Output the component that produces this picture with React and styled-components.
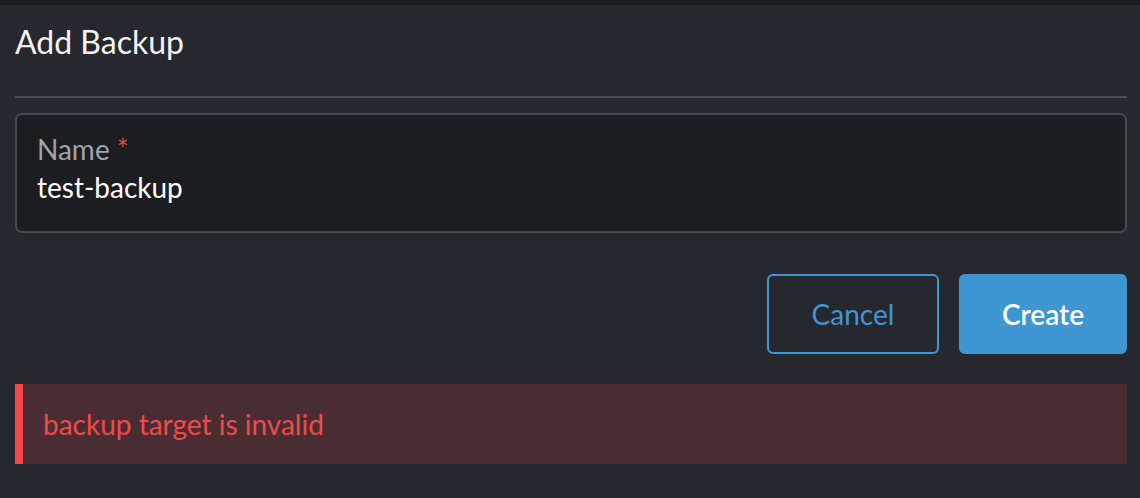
import React from "react";
import styled, { createGlobalStyle } from "styled-components";

const GlobalStyle = createGlobalStyle`
  html, body {
    margin: 0;
    padding: 0;
    background: #27282d;
    font-family: Lato, "Open Sans", sans-serif;
  }
`;

const Page = styled.div`
  width: 1140px;
  height: 498px;
  background: #27282d;
  border-top: 5px solid #1c1d21;
  box-sizing: border-box;
`;

const Content = styled.div`
  padding: 0 13px 0 15px;
  display: flex;
  flex-direction: column;
`;

const Title = styled.h1`
  margin: 0;
  padding: 19px 0 0;
  height: 93px;
  box-sizing: border-box;
  font-size: 32px;
  font-weight: 400;
  line-height: 36px;
  color: #f4f4f6;
  border-bottom: 2px solid #4b4c51;
`;

const Field = styled.div`
  margin-top: 15px;
  height: 120px;
  box-sizing: border-box;
  border: 2px solid #48494e;
  border-radius: 7px;
  background: #1c1d21;
  padding: 16px 20px 0;
  display: flex;
  flex-direction: column;
`;

const Label = styled.label`
  font-size: 28px;
  line-height: 36px;
  color: #a2a3ad;
`;

const Required = styled.span`
  color: #e04848;
  margin-left: 7px;
`;

const Value = styled.div`
  font-size: 28px;
  line-height: 40px;
  color: #ffffff;
`;

const Actions = styled.div`
  margin-top: 41px;
  display: flex;
  justify-content: flex-end;
  gap: 20px;
`;

const Button = styled.button`
  height: 80px;
  width: ${(p) => p.$width}px;
  box-sizing: border-box;
  border-radius: 6px;
  border: 2px solid #3e97d3;
  background: ${(p) => (p.$primary ? "#3e97d3" : "transparent")};
  color: ${(p) => (p.$primary ? "#ffffff" : "#3e97d3")};
  font-family: Lato, "Open Sans", sans-serif;
  font-size: 28px;
  font-weight: ${(p) => (p.$primary ? 600 : 400)};
  padding: 0;
`;

const Banner = styled.div`
  margin-top: 30px;
  height: 80px;
  box-sizing: border-box;
  background: #4a2d32;
  border-left: 8px solid #f64848;
  padding-left: 20px;
  display: flex;
  align-items: center;
  font-size: 28px;
  color: #ef4b4b;
`;

export default function App() {
  return (
    <>
      <GlobalStyle />
      <Page>
        <Content>
          <Title>Add Backup</Title>
          <Field>
            <Label>
              Name<Required>*</Required>
            </Label>
            <Value>test-backup</Value>
          </Field>
          <Actions>
            <Button $width={172}>Cancel</Button>
            <Button $width={168} $primary>
              Create
            </Button>
          </Actions>
          <Banner>backup target is invalid</Banner>
        </Content>
      </Page>
    </>
  );
}
